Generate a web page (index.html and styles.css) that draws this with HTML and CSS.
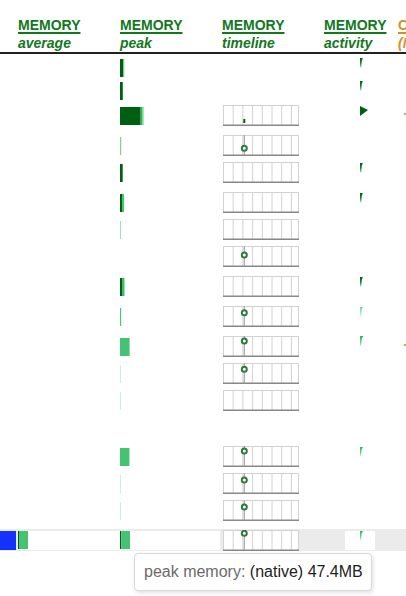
FILE: index.html
```html
<!DOCTYPE html>
<html>
<head>
<meta charset="utf-8">
<link rel="stylesheet" href="styles.css">
</head>
<body>
<svg class="defs" width="0" height="0" aria-hidden="true">
  <defs>
    <linearGradient id="gDark" x1="0" y1="0" x2="0" y2="1">
      <stop offset="0" stop-color="#005f12"/>
      <stop offset="0.55" stop-color="#1f8233"/>
      <stop offset="1" stop-color="#a9e0b6"/>
    </linearGradient>
    <linearGradient id="gMid" x1="0" y1="0" x2="0" y2="1">
      <stop offset="0" stop-color="#2fb35c"/>
      <stop offset="0.6" stop-color="#5fcf86"/>
      <stop offset="1" stop-color="#c9efd6"/>
    </linearGradient>
    <linearGradient id="gLight" x1="0" y1="0" x2="0" y2="1">
      <stop offset="0" stop-color="#6fd896"/>
      <stop offset="1" stop-color="#d6f4e0"/>
    </linearGradient>
    <symbol id="grid" viewBox="0 0 76 21">
      <g stroke="#d2d2d2" stroke-width="1">
        <line x1="0" y1="0.5" x2="76" y2="0.5"/>
        <line x1="0.5" y1="0" x2="0.5" y2="21"/>
        <line x1="10.2" y1="0" x2="10.2" y2="21"/>
        <line x1="19.9" y1="0" x2="19.9" y2="21"/>
        <line x1="29.6" y1="0" x2="29.6" y2="21"/>
        <line x1="39.3" y1="0" x2="39.3" y2="21"/>
        <line x1="49" y1="0" x2="49" y2="21"/>
        <line x1="58.7" y1="0" x2="58.7" y2="21"/>
        <line x1="68.4" y1="0" x2="68.4" y2="21"/>
        <line x1="75.5" y1="0" x2="75.5" y2="21"/>
      </g>
      <line x1="0" y1="20.25" x2="76" y2="20.25" stroke="#888" stroke-width="1.5"/>
    </symbol>
    <symbol id="wedge" viewBox="0 0 4 10">
      <polygon points="0,0 2.8,0 1.8,3 1.3,9.5 0,9.5"/>
    </symbol>
  </defs>
</svg>

<div class="page">
  <div class="head">
    <div class="hc"></div>
    <div class="hc green"><span class="t">MEMORY</span><span class="s">average</span></div>
    <div class="hc green"><span class="t">MEMORY</span><span class="s">peak</span></div>
    <div class="hc green"><span class="t">MEMORY</span><span class="s">timeline</span></div>
    <div class="hc green"><span class="t">MEMORY</span><span class="s">activity</span></div>
    <div class="hc orange"><span class="t">COPY</span><span class="s">(MB/s)</span></div>
  </div>

  <div class="rows">
    <!-- 1 -->
    <div class="row h23">
      <div></div><div></div>
      <svg class="bar" width="100" height="18"><rect width="3.5" height="18" fill="#005f12"/><rect x="3.5" width="0.9" height="18" fill="#9bd8a6"/></svg>
      <div></div>
      <svg class="act" width="30" height="19"><use href="#wedge" x="15" y="0" width="4" height="10" fill="url(#gDark)"/></svg>
      <div></div>
    </div>
    <!-- 2 -->
    <div class="row h25">
      <div></div><div></div>
      <svg class="bar" width="100" height="18"><rect width="2" height="18" fill="#005f12"/><rect x="2" width="1" height="18" fill="#2b8a3b"/></svg>
      <div></div>
      <svg class="act" width="30" height="19"><use href="#wedge" x="15" y="0" width="4" height="10" fill="url(#gDark)"/></svg>
      <div></div>
    </div>
    <!-- 3 -->
    <div class="row h30">
      <div></div><div></div>
      <svg class="bar" width="100" height="18"><rect width="20" height="18" fill="#005f12"/><rect x="20" width="2" height="18" fill="#38a955"/><rect x="22" width="1.7" height="18" fill="#7fdc9d"/></svg>
      <svg class="tl" width="76" height="21"><use href="#grid" width="76" height="21"/><rect x="20.3" y="14" width="2" height="4" fill="#005f12"/></svg>
      <svg class="act" width="30" height="19"><polygon points="15,0 23,4 15,10" fill="#005f12"/></svg>
      <div class="dot"></div>
    </div>
    <!-- 4 -->
    <div class="row h27">
      <div></div><div></div>
      <svg class="bar" width="100" height="18"><rect width="1.2" height="18" fill="#8ec99b"/></svg>
      <svg class="tl" width="76" height="21"><use href="#grid" width="76" height="21"/><line class="vl" x1="21.3" y1="0" x2="21.3" y2="20"/><circle class="mk" cx="21.3" cy="13.3" r="2.5"/></svg>
      <div></div><div></div>
    </div>
    <!-- 5 -->
    <div class="row h30">
      <div></div><div></div>
      <svg class="bar" width="100" height="18"><rect width="2.7" height="18" fill="#005f12"/></svg>
      <svg class="tl" width="76" height="21"><use href="#grid" width="76" height="21"/></svg>
      <svg class="act" width="30" height="19"><use href="#wedge" x="15" y="0" width="4" height="10" fill="url(#gDark)"/></svg>
      <div></div>
    </div>
    <!-- 6 -->
    <div class="row h27">
      <div></div><div></div>
      <svg class="bar" width="100" height="18"><rect width="2" height="18" fill="#005f12"/><rect x="2" width="2" height="18" fill="#3bcc68"/></svg>
      <svg class="tl" width="76" height="21"><use href="#grid" width="76" height="21"/></svg>
      <svg class="act" width="30" height="19"><use href="#wedge" x="15" y="0" width="4" height="10" fill="url(#gDark)"/></svg>
      <div></div>
    </div>
    <!-- 7 -->
    <div class="row h27">
      <div></div><div></div>
      <svg class="bar" width="100" height="18"><rect width="1" height="18" fill="#a6dcb6"/></svg>
      <svg class="tl" width="76" height="21"><use href="#grid" width="76" height="21"/></svg>
      <div></div><div></div>
    </div>
    <!-- 8 -->
    <div class="row h30">
      <div></div><div></div>
      <div></div>
      <svg class="tl" width="76" height="21"><use href="#grid" width="76" height="21"/><line class="vl" x1="21.3" y1="0" x2="21.3" y2="20"/><circle class="mk" cx="21.3" cy="9" r="2.5"/></svg>
      <div></div><div></div>
    </div>
    <!-- 9 -->
    <div class="row h30">
      <div></div><div></div>
      <svg class="bar" width="100" height="18"><rect width="2" height="18" fill="#005f12"/><rect x="2" width="2" height="18" fill="#37c064"/><rect x="4" width="1" height="18" fill="#9fe3b5"/></svg>
      <svg class="tl" width="76" height="21"><use href="#grid" width="76" height="21"/></svg>
      <svg class="act" width="30" height="19"><use href="#wedge" x="15" y="0" width="4" height="10" fill="url(#gDark)"/></svg>
      <div></div>
    </div>
    <!-- 10 -->
    <div class="row h30">
      <div></div><div></div>
      <svg class="bar" width="100" height="18"><rect width="1.2" height="18" fill="#4cc776"/></svg>
      <svg class="tl" width="76" height="21"><use href="#grid" width="76" height="21"/><line class="vl" x1="21.3" y1="0" x2="21.3" y2="20"/><circle class="mk" cx="21.3" cy="6.7" r="2.5"/></svg>
      <svg class="act" width="30" height="19"><use href="#wedge" x="15" y="0" width="4" height="10" fill="url(#gLight)"/></svg>
      <div></div>
    </div>
    <!-- 11 -->
    <div class="row h27">
      <div></div><div></div>
      <svg class="bar" width="100" height="18"><rect width="9" height="18" fill="#45c372"/><rect x="9" width="1" height="18" fill="#8fdcaa"/></svg>
      <svg class="tl" width="76" height="21"><use href="#grid" width="76" height="21"/><line class="vl" x1="21.3" y1="0" x2="21.3" y2="20"/><circle class="mk" cx="21.3" cy="5" r="2.5"/></svg>
      <svg class="act act0" width="30" height="19"><polygon points="15,0 18.5,0 16.8,2.5 16,10 15,10" fill="url(#gMid)"/></svg>
      <div class="dot dot11"></div>
    </div>
    <!-- 12 -->
    <div class="row h27">
      <div></div><div></div>
      <svg class="bar" width="100" height="18"><rect width="1" height="18" fill="#cdeed8"/></svg>
      <svg class="tl" width="76" height="21"><use href="#grid" width="76" height="21"/><line class="vl" x1="21.3" y1="0" x2="21.3" y2="20"/><circle class="mk" cx="21.3" cy="6.3" r="2.5"/></svg>
      <div></div><div></div>
    </div>
    <!-- 13 -->
    <div class="row h28">
      <div></div><div></div>
      <svg class="bar" width="100" height="18"><rect width="1" height="18" fill="#cdeed8"/></svg>
      <svg class="tl" width="76" height="21"><use href="#grid" width="76" height="21"/></svg>
      <div></div><div></div>
    </div>
    <!-- 14 -->
    <div class="row h28"></div>
    <!-- 15 -->
    <div class="row h27">
      <div></div><div></div>
      <svg class="bar" width="100" height="18"><rect width="9" height="18" fill="#45c372"/><rect x="9" width="0.7" height="18" fill="#8fdcaa"/></svg>
      <svg class="tl" width="76" height="21"><use href="#grid" width="76" height="21"/><line class="vl" x1="21.3" y1="0" x2="21.3" y2="20"/><circle class="mk" cx="21.3" cy="5" r="2.5"/></svg>
      <svg class="act" width="30" height="19"><polygon points="15,0 18,0 16.6,2.5 16,9 15,9" fill="url(#gMid)"/></svg>
      <div></div>
    </div>
    <!-- 16 -->
    <div class="row h27">
      <div></div><div></div>
      <svg class="bar" width="100" height="18"><rect width="1" height="18" fill="#cdeed8"/></svg>
      <svg class="tl" width="76" height="21"><use href="#grid" width="76" height="21"/><line class="vl" x1="21.3" y1="0" x2="21.3" y2="20"/><circle class="mk" cx="21.3" cy="7" r="2.5"/></svg>
      <div></div><div></div>
    </div>
    <!-- 17 -->
    <div class="row h29">
      <div></div><div></div>
      <svg class="bar" width="100" height="18"><rect width="1" height="18" fill="#cdeed8"/></svg>
      <svg class="tl" width="76" height="21"><use href="#grid" width="76" height="21"/><line class="vl" x1="21.3" y1="0" x2="21.3" y2="20"/><circle class="mk" cx="21.3" cy="7" r="2.5"/></svg>
      <div></div><div></div>
    </div>
    <!-- 18 selected -->
    <div class="row h22 sel">
      <svg class="blue" width="16" height="19"><rect width="16" height="19" fill="#1431ff"/></svg>
      <svg class="bar wbg" width="102" height="18"><rect width="1" height="18" fill="#005f12"/><rect x="1" width="9" height="18" fill="#45c372"/></svg>
      <svg class="bar wbg" width="100" height="18"><rect width="1.2" height="18" fill="#005f12"/><rect x="1.2" width="8.8" height="18" fill="#45c372"/></svg>
      <svg class="tl wbg" width="76" height="21"><use href="#grid" width="76" height="21"/><line class="vl" x1="21.3" y1="0" x2="21.3" y2="20"/><circle class="mk" cx="21.3" cy="3.3" r="2.5"/></svg>
      <svg class="act wbg" width="30" height="19"><polygon points="15,0 18,0 16.6,2.5 16,9 15,9" fill="url(#gMid)"/></svg>
      <div></div>
    </div>
  </div>

  <div class="tooltip"><span class="key">peak memory:</span> <span class="val">(native) 47.4MB</span></div>
</div>
</body>
</html>
```

FILE: styles.css
```css
html, body {
  margin: 0;
  padding: 0;
  overflow: hidden;
  background: #fff;
}

body {
  width: 406px;
  height: 596px;
  position: relative;
  font-family: "Liberation Sans", Arial, Helvetica, sans-serif;
}

.defs {
  position: absolute;
  width: 0;
  height: 0;
  overflow: hidden;
}

.page {
  width: 640px;
}

.head,
.row {
  display: grid;
  grid-template-columns: 18px 102px 102px 102px 74px 140px;
}

.head {
  padding-top: 16px;
  border-bottom: 2px solid #222;
  font-size: 14px;
  line-height: 18px;
  font-weight: bold;
  white-space: nowrap;
}

.hc {
  display: flex;
  flex-direction: column;
  align-items: flex-start;
}

.hc .t {
  text-decoration: underline;
  text-underline-offset: 2px;
  text-decoration-thickness: 1.5px;
}

.hc .s {
  font-style: italic;
}

.green { color: #12781e; }
.orange { color: #d2912d; }

.rows {
  padding-top: 3px;
}

.row {
  align-items: start;
  box-sizing: border-box;
}

.h22 { height: 22px; }
.h23 { height: 23px; }
.h25 { height: 25px; }
.h27 { height: 27px; }
.h28 { height: 28px; }
.h29 { height: 29px; }
.h30 { height: 30px; }

.bar {
  display: block;
  margin-top: 2px;
}

.tl {
  display: block;
  margin-left: 1px;
}

.act {
  display: block;
  margin-left: 21px;
  margin-top: 1px;
}

.act0 {
  margin-top: 0;
}

.vl {
  stroke: #9a9a9a;
  stroke-width: 1;
}

.mk {
  fill: #fff;
  stroke: #2f7a3f;
  stroke-width: 2;
}

.dot {
  width: 2px;
  height: 2px;
  background: #e0a050;
  margin-left: 6px;
  margin-top: 8px;
}

.sel {
  background: #ebebeb;
  padding-top: 1px;
}

.sel .wbg {
  background: #fff;
}

.sel .bar {
  margin-top: 1px;
  height: 19px;
}

.sel .blue {
  display: block;
  margin-top: 1px;
}

.tooltip {
  position: absolute;
  left: 134px;
  top: 553px;
  width: 219px;
  padding: 9px 8px 9px 9px;
  background: #fff;
  border: 1px solid #d9d9d9;
  border-radius: 4px;
  box-shadow: 1px 2px 4px rgba(0, 0, 0, 0.12);
  font-size: 16px;
  line-height: 18px;
  white-space: nowrap;
}

.tooltip .key { color: #6b6b6b; }
.tooltip .val { color: #222; }
```
